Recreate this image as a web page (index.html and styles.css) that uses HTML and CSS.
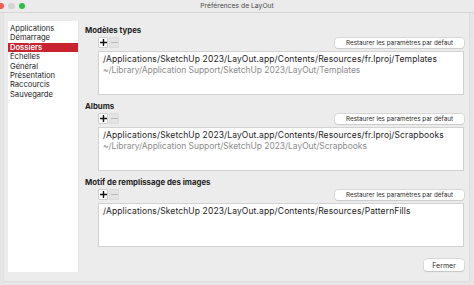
FILE: index.html
```html
<!DOCTYPE html>
<html lang="fr">
<head>
<meta charset="utf-8">
<title>Préférences de LayOut</title>
<link rel="stylesheet" href="styles.css">
</head>
<body>
<div class="window">
  <header class="titlebar">
    <div class="lights">
      <span class="light red"></span>
      <span class="light gray"></span>
      <span class="light green"></span>
    </div>
    <div class="title">Préférences de LayOut</div>
    <div></div>
  </header>
  <div class="content">
    <ul class="sidebar">
      <li>Applications</li>
      <li>Démarrage</li>
      <li class="selected">Dossiers</li>
      <li>Échelles</li>
      <li>Général</li>
      <li>Présentation</li>
      <li>Raccourcis</li>
      <li>Sauvegarde</li>
    </ul>
    <main class="main">
      <section class="group">
        <h2 class="group-title">Modèles types</h2>
        <div class="toolbar">
          <div class="pm">
            <button class="pm-btn add"><svg width="7" height="7" viewBox="0 0 7 7"><path d="M3.5 0v7M0 3.5h7" stroke="#111" stroke-width="1.4"/></svg></button>
            <button class="pm-btn remove"><svg width="7" height="7" viewBox="0 0 7 7"><path d="M0 3.5h7" stroke="#b9b9b9" stroke-width="1"/></svg></button>
          </div>
          <button class="restore">Restaurer les paramètres par défaut</button>
        </div>
        <div class="paths">
          <div class="path">/Applications/SketchUp 2023/LayOut.app/Contents/Resources/fr.lproj/Templates</div>
          <div class="path dim">~/Library/Application Support/SketchUp 2023/LayOut/Templates</div>
        </div>
      </section>
      <section class="group">
        <h2 class="group-title">Albums</h2>
        <div class="toolbar">
          <div class="pm">
            <button class="pm-btn add"><svg width="7" height="7" viewBox="0 0 7 7"><path d="M3.5 0v7M0 3.5h7" stroke="#111" stroke-width="1.4"/></svg></button>
            <button class="pm-btn remove"><svg width="7" height="7" viewBox="0 0 7 7"><path d="M0 3.5h7" stroke="#b9b9b9" stroke-width="1"/></svg></button>
          </div>
          <button class="restore">Restaurer les paramètres par défaut</button>
        </div>
        <div class="paths">
          <div class="path">/Applications/SketchUp 2023/LayOut.app/Contents/Resources/fr.lproj/Scrapbooks</div>
          <div class="path dim">~/Library/Application Support/SketchUp 2023/LayOut/Scrapbooks</div>
        </div>
      </section>
      <section class="group">
        <h2 class="group-title">Motif de remplissage des images</h2>
        <div class="toolbar">
          <div class="pm">
            <button class="pm-btn add"><svg width="7" height="7" viewBox="0 0 7 7"><path d="M3.5 0v7M0 3.5h7" stroke="#111" stroke-width="1.4"/></svg></button>
            <button class="pm-btn remove"><svg width="7" height="7" viewBox="0 0 7 7"><path d="M0 3.5h7" stroke="#b9b9b9" stroke-width="1"/></svg></button>
          </div>
          <button class="restore">Restaurer les paramètres par défaut</button>
        </div>
        <div class="paths">
          <div class="path">/Applications/SketchUp 2023/LayOut.app/Contents/Resources/PatternFills</div>
        </div>
      </section>
      <div class="footer">
        <button class="close">Fermer</button>
      </div>
    </main>
  </div>
</div>
</body>
</html>
```

FILE: styles.css
```css
* { box-sizing: border-box; }

html, body {
  margin: 0;
  padding: 0;
}

body {
  width: 474px;
  height: 285px;
  overflow: hidden;
  background: #e6e6e6;
  font-family: Inter, "Noto Sans", "Liberation Sans", sans-serif;
  color: #1e1e1e;
}

.window {
  width: 474px;
  height: 285px;
  display: flex;
  flex-direction: column;
}

.titlebar {
  height: 13px;
  flex: none;
  display: grid;
  grid-template-columns: 1fr auto 1fr;
  align-items: center;
  background: #ebebeb;
  border-bottom: 1px solid #d6d6d6;
}

.lights {
  display: flex;
  gap: 4px;
  margin-left: -2.5px;
}

.light {
  width: 6.5px;
  height: 6.5px;
  border-radius: 50%;
}
.light.red { background: #f25a54; }
.light.gray { background: #d3d3d3; }
.light.green { background: #2cc041; }

.title {
  font-size: 6.8px;
  color: #4a4a4a;
  line-height: 12px;
}

.content {
  flex: 1;
  display: flex;
  margin: 0 4px 3px 3px;
  background: #ececec;
  border-right: 1px solid #dedede;
  border-bottom: 1px solid #dedede;
  border-left: 1px solid #e2e2e2;
  padding: 8px 0 9px 4px;
}

.sidebar {
  list-style: none;
  margin: 0;
  padding: 3px 0 0 0;
  width: 71px;
  flex: none;
  background: #ffffff;
  border-right: 1px solid #e4e4e4;
  font-size: 7.6px;
}

.sidebar li {
  height: 9.4px;
  line-height: 9.4px;
  padding-left: 2px;
  color: #222;
  white-space: nowrap;
}

.sidebar li.selected {
  background: #c8232f;
  color: #ffffff;
  font-weight: 600;
}

.main {
  flex: 1;
  display: flex;
  flex-direction: column;
  padding: 2px 5px 0 6px;
}

.group {
  display: flex;
  flex-direction: column;
  margin-bottom: 4px;
}

.group-title {
  margin: 2px 0 0 0;
  font-size: 7.8px;
  font-weight: 700;
  line-height: 10px;
  height: 10px;
  color: #1e1e1e;
}

.toolbar {
  display: flex;
  justify-content: space-between;
  align-items: flex-end;
  margin: 2px 0 3px 13px;
  height: 11px;
}

.pm {
  display: flex;
  gap: 1px;
}

.pm-btn {
  width: 10px;
  height: 11px;
  padding: 0;
  margin: 0;
  border: 1px solid #cfcfcf;
  border-radius: 1px;
  display: flex;
  align-items: center;
  justify-content: center;
}

.pm-btn.add { background: #ffffff; }
.pm-btn.remove { background: #e4e4e4; border-color: #dcdcdc; }

.restore {
  width: 129px;
  height: 10px;
  padding: 0;
  margin: 0;
  border: none;
  border-radius: 3px;
  background: #ffffff;
  box-shadow: 0 0 0 0.5px #c8c8c8, 0 0.5px 1px rgba(0,0,0,0.12);
  font-family: inherit;
  font-size: 6.3px;
  line-height: 10px;
  color: #2a2a2a;
}

.paths {
  margin-left: 13px;
  height: 44px;
  background: #ffffff;
  border: 1px solid #d2d2d2;
  padding: 2px 4px;
}

.path {
  font-size: 8.5px;
  letter-spacing: 0.12px;
  line-height: 11px;
  color: #1e1e1e;
  white-space: nowrap;
}

.path.dim {
  color: #8c8c8c;
  letter-spacing: -0.05px;
}

.footer {
  display: flex;
  justify-content: flex-end;
  margin-top: 8px;
}

.close {
  width: 40px;
  height: 12px;
  padding: 0;
  border: none;
  border-radius: 3px;
  background: #ffffff;
  box-shadow: 0 0 0 0.5px #c8c8c8, 0 0.5px 1px rgba(0,0,0,0.15);
  font-family: inherit;
  font-size: 7px;
  color: #2a2a2a;
}
```
